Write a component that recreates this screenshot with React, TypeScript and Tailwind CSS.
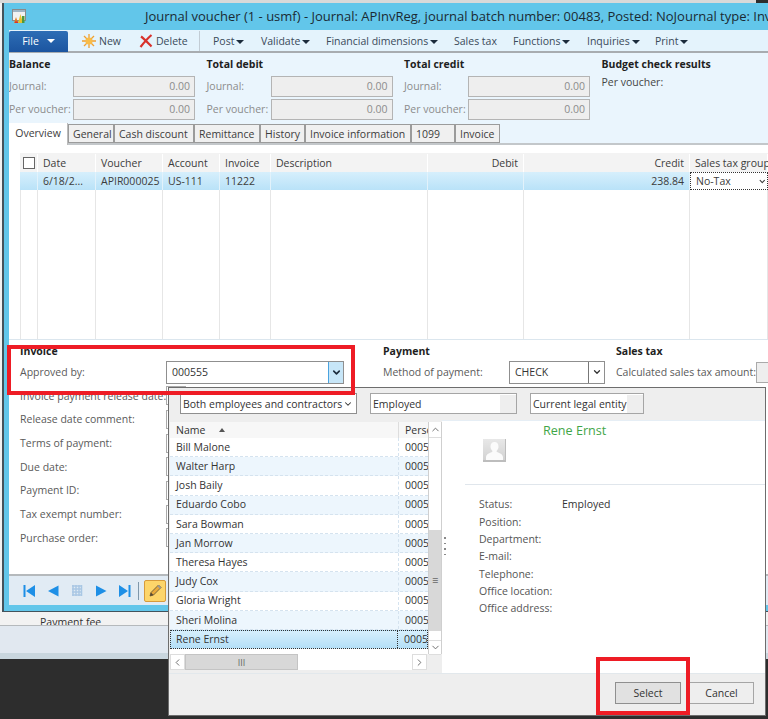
import { ChevronDown, ChevronUp, ChevronLeft, ChevronRight } from "lucide-react";

const font = { fontFamily: '"Open Sans", "Noto Sans", sans-serif' };

const menu = [
  { label: "Post", w: "w-[48px]" },
  { label: "Validate", w: "w-[65px]" },
  { label: "Financial dimensions", w: "w-[128px]" },
  { label: "Sales tax", w: "w-[59px]", plain: true },
  { label: "Functions", w: "w-[74px]" },
  { label: "Inquiries", w: "w-[68px]" },
  { label: "Print", w: "w-[50px]" },
];

const tabs = [
  { label: "General", w: "w-[46px]" },
  { label: "Cash discount", w: "w-[80px]" },
  { label: "Remittance", w: "w-[66px]" },
  { label: "History", w: "w-[45px]" },
  { label: "Invoice information", w: "w-[106px]" },
  { label: "1099", w: "w-[44px]" },
  { label: "Invoice", w: "w-[45px]" },
];

const cols = [
  { w: "w-[18px]", head: "", cell: "" },
  { w: "w-[58px]", head: "Date", cell: "6/18/2..." },
  { w: "w-[67px]", head: "Voucher", cell: "APIR000025" },
  { w: "w-[57px]", head: "Account", cell: "US-111" },
  { w: "w-[51px]", head: "Invoice", cell: "11222" },
  { w: "w-[157px]", head: "Description", cell: "" },
  { w: "w-[96px]", head: "Debit", cell: "", right: true },
  { w: "w-[166px]", head: "Credit", cell: "238.84", right: true },
  { w: "w-[78px]", head: "Sales tax group", cell: "" },
];

const leftLabels = [
  "Invoice payment release date:",
  "Release date comment:",
  "Terms of payment:",
  "Due date:",
  "Payment ID:",
  "Tax exempt number:",
  "Purchase order:",
];

const people = [
  ["Bill Malone", "0005"],
  ["Walter Harp", "0005"],
  ["Josh Baily", "0005"],
  ["Eduardo  Cobo", "0005"],
  ["Sara Bowman", "0005"],
  ["Jan Morrow", "0005"],
  ["Theresa Hayes", "0005"],
  ["Judy Cox", "0005"],
  ["Gloria Wright", "0005"],
  ["Sheri Molina", "0005"],
];

const details = ["Status:", "Position:", "Department:", "E-mail:", "Telephone:", "Office location:", "Office address:"];

function Caret() {
  return <span className="ml-[2px] inline-block border-x-[4px] border-t-[4px] border-x-transparent border-t-[#1c2c3c] align-middle" />;
}

function TotalsGroup({ title }: { title: string }) {
  return (
    <div className="w-[197.5px] shrink-0">
      <div className="h-[23px] pt-[4px] font-bold leading-[14px] text-[#1e1e1e]">{title}</div>
      {["Journal:", "Per voucher:"].map((l) => (
        <div key={l} className="mb-[2px] flex h-[21px] items-center whitespace-nowrap">
          <span className="w-[64px] shrink-0 text-[#8c8c8c]">{l}</span>
          <div className="flex h-[21px] w-[122px] items-center justify-end border border-[#b4b4b4] bg-[#eeeeee] pr-[4px] text-[#8c8c8c]">0.00</div>
        </div>
      ))}
    </div>
  );
}

function NavIcon({ kind }: { kind: string }) {
  if (kind === "grid") {
    return (
      <svg width="14" height="14" viewBox="0 0 14 14" className="mx-[5px] shrink-0">
        <path d="M2 2h10M2 5h10M2 8h10M2 11h10M3 1v11M6 1v11M9 1v11M11.500 1v11" stroke="#a9c7e4" strokeWidth="1.5" />
      </svg>
    );
  }
  const d = {
    first: "M1.500 1h2v12h-2zM13 1v12L4 7z",
    prev: "M12.500 1.500v11L2 7z",
    next: "M2 1.500v11L12.500 7z",
    last: "M1 1v12l9-6zM10.500 1h2v12h-2z",
  }[kind];
  return (
    <svg width="14" height="14" viewBox="0 0 14 14" className="mx-[5px] shrink-0">
      <path d={d} fill="#1e8fe6" />
    </svg>
  );
}

export default function App() {
  return (
    <div className="relative h-[719px] w-[768px] overflow-hidden bg-[#2d2d2d] text-[10.5px] leading-none" style={font}>
      {/* window behind the voucher form */}
      <div className="flex h-[659px] w-full flex-col bg-[#e9eef3]">
        <div className="flex h-[3px] shrink-0 justify-end bg-[#d9d9d9]">
          <div className="w-[12px] bg-[#2d2d2d]" />
        </div>
        <div className="h-[623px] shrink-0 overflow-hidden border-b border-[#b5b9bc] bg-[#f2f2f2] pl-[40px] pt-[614px] text-[#333]">Payment fee</div>
        <div className="flex-1 bg-[#e1e8f0]" />
        <div className="h-[6px] shrink-0 bg-[#c9d6de]" />
      </div>

      {/* voucher form */}
      <div className="absolute left-[2px] top-[3px] flex h-[609px] w-[766px] flex-col border-b border-l-2 border-[#44535c] bg-[#62c6ea] pb-[6px]">
        <div className="flex h-[27px] shrink-0 items-center whitespace-nowrap">
          <svg width="15" height="15" viewBox="0 0 15 15" className="ml-[8px] shrink-0">
            <rect x="0.500" y="0.500" width="13" height="11" fill="#f1f1f1" stroke="#8a8a8a" />
            <rect x="1" y="1" width="12" height="2" fill="#9fb4c4" />
            <path d="M2 14l2-6 2 6z" fill="#e07a24" />
            <path d="M6 14l2.500-9L11 14z" fill="#e8c22c" />
            <rect x="10" y="7" width="2.500" height="7" fill="#4f9a3c" />
            <rect x="3" y="12.500" width="3" height="1.500" fill="#d8322c" />
          </svg>
          <span className="ml-[118px] text-[13px] text-[#1b2a33]">Journal voucher (1 - usmf) - Journal: APInvReg, journal batch number: 00483, Posted: NoJournal type: Invoice</span>
        </div>

        <div className="ml-[5px] flex min-h-0 flex-1 flex-col overflow-hidden bg-white">
          {/* toolbar */}
          <div className="flex h-[23px] shrink-0 items-center border-b-2 border-[#a8acb0] bg-[#e4f3fc] pt-px whitespace-nowrap text-[#3a4a5a]">
            <div className="flex h-[21px] w-[59px] shrink-0 items-center justify-center gap-[8px] rounded-t-[2px] bg-gradient-to-b from-[#2d6db5] to-[#1c55a0] text-white">
              File
              <span className="inline-block border-x-[4px] border-t-[4px] border-x-transparent border-t-white" />
            </div>
            <svg width="14" height="14" viewBox="0 0 14 14" className="ml-[14px] shrink-0">
              <path d="M7 0v14M0 7h14M2 2l10 10M12 2L2 12" stroke="#f0a030" strokeWidth="1.300" />
              <circle cx="7" cy="7" r="3.600" fill="#f8bc48" />
            </svg>
            <span className="ml-[3px] w-[22px]">New</span>
            <svg width="14" height="14" viewBox="0 0 14 14" className="ml-[18px] shrink-0">
              <path d="M2 2.500c3 2 7 6.500 10.500 10M12.500 1C9 4 5 8.500 1.500 13" fill="none" stroke="#d8322c" strokeWidth="2.200" />
            </svg>
            <span className="ml-[3px] w-[32px]">Delete</span>
            <div className="ml-[11px] mr-[13px] h-[20px] w-px shrink-0 bg-[#c2ccd4]" />
            {menu.map((m) => (
              <span key={m.label} className={`${m.w} shrink-0`}>
                {m.label}
                {!m.plain && <Caret />}
              </span>
            ))}
          </div>

          {/* totals */}
          <div className="flex h-[72px] shrink-0 bg-[#eaf5fd]">
            <TotalsGroup title="Balance" />
            <TotalsGroup title="Total debit" />
            <TotalsGroup title="Total credit" />
            <div className="text-[#444]">
              <div className="h-[23px] pt-[4px] font-bold leading-[14px] text-[#1e1e1e]">Budget check results</div>
              <div className="leading-[13px]">Per voucher:</div>
            </div>
          </div>

          {/* tabs */}
          <div className="flex h-[20px] shrink-0 items-end border-b-2 border-[#c3c7ca] bg-[#eaf5fd] text-[#3c3c3c] whitespace-nowrap">
            <div className="relative z-10 -mb-[2px] flex h-[22px] w-[59px] items-center justify-center border-r border-[#bbb] bg-white pb-[2px]">Overview</div>
            {tabs.map((t) => (
              <div key={t.label} className={`flex h-[19px] items-center border border-[#9b9b9b] bg-[#f0f0f0] pl-[4px] pt-px ${t.w}`}>
                {t.label}
              </div>
            ))}
          </div>

          {/* lines grid */}
          <div className="h-[195px] shrink-0 border-b border-[#dbe6ee] bg-white pl-[11px] pt-[8px] text-[#3c3c3c]">
            <div className="flex h-[19px] bg-[#f3f3f3] pt-px whitespace-nowrap">
              {cols.map((c, i) => (
                <div key={i} className={`flex shrink-0 items-center border-r border-[#fff] px-[5px] ${c.w} ${c.right ? "justify-end" : ""}`}>
                  {i === 0 ? <div className="-ml-[2px] h-[12px] w-[12px] shrink-0 border border-[#666] bg-white" /> : c.head}
                </div>
              ))}
            </div>
            <div className="flex h-[18px] bg-gradient-to-b from-[#d6effc] to-[#b9e2f8] whitespace-nowrap">
              {cols.map((c, i) =>
                i === 8 ? (
                  <div key={i} className="flex w-[78px] shrink-0 items-center border border-dotted border-[#333] bg-white pl-[5px]">
                    <span className="w-[66px]">No-Tax</span>
                    <ChevronDown size={9} strokeWidth={3} />
                  </div>
                ) : (
                  <div key={i} className={`flex shrink-0 items-center border-r border-[#e2f2fb] px-[5px] ${c.w} ${c.right ? "justify-end" : ""}`}>
                    {c.cell}
                  </div>
                ),
              )}
            </div>
            <div className="flex h-[149px]">
              {cols.map((c, i) => (
                <div key={i} className={`shrink-0 border-r border-[#e6e6e6] ${i === 0 ? "border-l" : ""} ${c.w}`} />
              ))}
            </div>
          </div>

          {/* invoice, payment, sales tax */}
          <div className="flex h-[234px] shrink-0 bg-white pl-[11px] pt-[4px] text-[#5a5a5a] whitespace-nowrap">
            <div className="w-[363px] shrink-0">
              <div className="h-[16px] font-bold leading-[14px] text-[#1e1e1e]">Invoice</div>
              <div className="flex h-[24px] items-center">
                <span className="w-[146px]">Approved by:</span>
                <div className="flex h-[23px] w-[178px] items-center border border-[#8f8f8f] bg-white pl-[5px] text-[#333]">
                  <span className="flex-1">000555</span>
                  <div className="flex h-full w-[15px] items-center justify-center border-l border-[#4aa3df] bg-[#c7e6f8]">
                    <ChevronDown size={11} strokeWidth={3.500} color="#1c2c3c" />
                  </div>
                </div>
              </div>
              {leftLabels.map((l) => (
                <div key={l} className="flex h-[23.700px] items-center">
                  <span className="w-[146px]">{l}</span>
                  <div className="h-[19px] w-[20px] border border-[#aaa]" />
                </div>
              ))}
            </div>
            <div className="w-[233px] shrink-0">
              <div className="h-[16px] font-bold leading-[14px] text-[#1e1e1e]">Payment</div>
              <div className="flex h-[24px] items-center">
                <span className="w-[126px]">Method of payment:</span>
                <div className="flex h-[23px] w-[96px] items-center border border-[#8f8f8f] pl-[5px] text-[#333]">
                  <span className="flex-1">CHECK</span>
                  <div className="flex h-full w-[16px] items-center justify-center border-l border-[#777]">
                    <ChevronDown size={10} strokeWidth={3} />
                  </div>
                </div>
              </div>
            </div>
            <div>
              <div className="h-[16px] font-bold leading-[14px] text-[#1e1e1e]">Sales tax</div>
              <div className="flex h-[24px] items-center">
                <span className="w-[140px]">Calculated sales tax amount:</span>
                <div className="h-[21px] w-[20px] border border-[#aaa] bg-[#eee]" />
              </div>
            </div>
          </div>

          {/* record navigation */}
          <div className="flex h-[28px] flex-1 items-center border-t-2 border-[#b5b9bc] bg-[#e1ebf4] pl-[8px]">
            <NavIcon kind="first" />
            <NavIcon kind="prev" />
            <NavIcon kind="grid" />
            <NavIcon kind="next" />
            <NavIcon kind="last" />
            <div className="ml-px h-[18px] w-px shrink-0 bg-[#7f97aa]" />
            <div className="ml-[5px] flex h-[22px] w-[22px] shrink-0 items-center justify-center rounded-[2px] border border-[#d79b3c] bg-[#fdd56a]">
              <svg width="15" height="15" viewBox="0 0 15 15">
                <path d="M2 13l1-3.500L10.500 2l2.500 2.500L5.500 12z" fill="#e9a93a" stroke="#6b5a3a" strokeWidth="0.900" />
                <path d="M10.500 2l2.500 2.500-1.200 1.200-2.500-2.500z" fill="#9a9a9a" />
                <path d="M2 13l1-3.500 2.500 2.500z" fill="#5a4a32" />
              </svg>
            </div>
          </div>
        </div>
      </div>

      {/* worker lookup popup */}
      <div className="absolute left-[168px] top-[387px] flex h-[329px] w-[598px] flex-col border border-[#6d6d6d] bg-[#eeeeee] text-[#333] whitespace-nowrap">
        <div className="flex h-[32px] shrink-0 items-start gap-[13px] pl-[11px] pt-[5px]">
          <div className="flex h-[21px] w-[177px] items-center border border-[#8f8f8f] bg-white pl-[2px] pt-px">
            <span className="flex-1">Both employees and contractors</span>
            <ChevronDown size={10} strokeWidth={2.500} className="mr-[3px]" />
          </div>
          <div className="flex h-[21px] w-[147px] items-center border border-[#a5a5a5] bg-white pl-[2px] pt-px">
            <span className="flex-1">Employed</span>
            <div className="h-full w-[16px] bg-[#eeeeee]" />
          </div>
          <div className="flex h-[21px] w-[114px] items-center border border-[#a5a5a5] bg-white pl-[2px] pt-px">
            <span className="flex-1">Current legal entity</span>
            <div className="h-full w-[17px] bg-[#eeeeee]" />
          </div>
        </div>

        <div className="flex h-[253px] shrink-0">
          {/* list */}
          <div className="flex w-[273px] shrink-0 flex-col pb-[3px] pl-px pt-[2px]">
            <div className="flex min-h-0 flex-1">
              <div className="w-[258px] shrink-0 bg-white">
                <div className="flex h-[16px] bg-[#f7f7f7]">
                  <div className="flex w-[229px] items-center border-r border-[#ddd] pl-[6px]">
                    Name
                    <span className="ml-[14px] inline-block border-x-[3px] border-b-[4px] border-x-transparent border-b-[#555]" />
                  </div>
                  <div className="flex w-[29px] items-center overflow-hidden pl-[6px]">Personnel</div>
                </div>
                {people.map(([name, id], i) => (
                  <div key={name} className={`flex h-[19.200px] border-b border-dashed border-[#d5e3ef] ${i % 2 ? "bg-[#edf6fd]" : "bg-white"}`}>
                    <div className="flex w-[229px] items-center border-r border-dashed border-[#d5e3ef] pl-[6px]">{name}</div>
                    <div className="flex w-[29px] items-center overflow-hidden pl-[6px]">{id}</div>
                  </div>
                ))}
                <div className="flex h-[19.200px] border border-dotted border-[#333] bg-gradient-to-b from-[#d6effc] to-[#b4dff7]">
                  <div className="flex w-[228px] items-center border-r border-dotted border-[#333] pl-[5px]">Rene Ernst</div>
                  <div className="flex w-[29px] items-center overflow-hidden pl-[6px]">0005</div>
                </div>
              </div>
              {/* vertical scroll bar */}
              <div className="flex w-[14px] shrink-0 flex-col border-x border-[#cfcfcf] bg-white">
                <div className="flex h-[16px] shrink-0 items-center justify-center border-b border-[#ddd]">
                  <ChevronUp size={11} color="#666" />
                </div>
                <div className="h-[92px] shrink-0" />
                <div className="flex h-[101px] shrink-0 items-center justify-center bg-[#d8d8d8] text-[#666]">≡</div>
                <div className="h-[9px] shrink-0" />
                <div className="flex h-[15px] shrink-0 items-center justify-center border-y border-[#ddd]">
                  <ChevronDown size={11} color="#666" />
                </div>
              </div>
            </div>
            {/* horizontal scroll bar */}
            <div className="flex h-[16px] shrink-0 pr-[15px]">
              <div className="flex w-[15px] items-center justify-center border border-[#ddd] bg-white">
                <ChevronLeft size={11} color="#666" />
              </div>
              <div className="flex w-[113px] items-center justify-center border border-[#c4c4c4] bg-[#d8d8d8] text-[9px] text-[#666]">III</div>
              <div className="flex-1 bg-white" />
              <div className="flex w-[15px] items-center justify-center border border-[#ddd] bg-white">
                <ChevronRight size={11} color="#666" />
              </div>
            </div>
          </div>

          {/* selected worker */}
          <div className="flex-1 border-t border-[#e6eef5] bg-white">
            <div className="pl-[101px] text-[12.6px] leading-[20px] text-[#3fa648]">Rene Ernst</div>
            <div className="ml-[41px] -mt-[2px] flex h-[23px] w-[23px] items-end justify-center overflow-hidden border-b-2 border-r border-[#bdbdbd] bg-gradient-to-b from-[#e8e8e8] to-[#d2d2d2]">
              <svg width="21" height="21" viewBox="0 0 21 21">
                <path d="M10.500 3c2.600 0 4 2 4 4.600 0 2-.9 3.400-1.800 4.200v1.200c2.800.9 5.800 2 6.300 5V21H2v-3c.5-3 3.500-4.100 6.300-5v-1.200C7.400 11 6.500 9.600 6.500 7.600 6.500 5 7.900 3 10.500 3z" fill="#fbfbfb" />
              </svg>
            </div>
            <div className="ml-[23px] mt-[22px] h-px bg-[#e0e6ec]" />
            <div className="mt-[11px] pl-[37px] text-[#555]">
              {details.map((d, i) => (
                <div key={d} className="flex h-[17.300px] items-center">
                  <span className="w-[83px]">{d}</span>
                  {i === 0 && <span className="text-[#333]">Employed</span>}
                </div>
              ))}
            </div>
          </div>
        </div>

        {/* footer buttons */}
        <div className="flex flex-1 items-start justify-end gap-[8px] border-t border-[#e2e8ec] pr-[11px] pt-[8px]">
          <div className="flex h-[22px] w-[66px] items-center justify-center border border-[#8f8f8f] bg-[#e1e1e1]">Select</div>
          <div className="flex h-[22px] w-[65px] items-center justify-center border border-[#a5a5a5] bg-[#eeeeee]">Cancel</div>
        </div>

        {/* splitter grip */}
        <div className="absolute left-[275px] top-[149px] flex flex-col gap-[4px]">
          <span className="size-[1.500px] bg-[#888]" />
          <span className="size-[1.500px] bg-[#888]" />
          <span className="size-[1.500px] bg-[#888]" />
          <span className="size-[1.500px] bg-[#888]" />
        </div>
      </div>

      {/* red callouts drawn on top of the screenshot */}
      <div className="absolute left-[7px] top-[345px] h-[50px] w-[348px] border-4 border-[#ee1c25]" />
      <div className="absolute left-[596px] top-[657px] h-[58px] w-[94px] border-4 border-[#ee1c25]" />
    </div>
  );
}
